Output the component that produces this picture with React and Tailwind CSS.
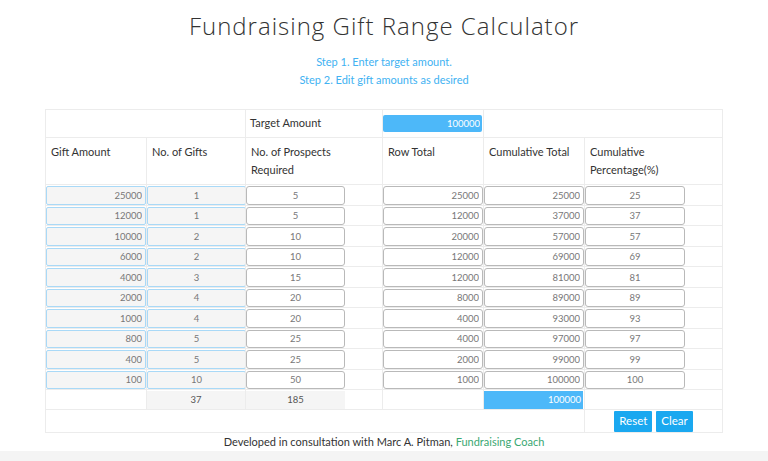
import React from "react";

const rows = [
  [25000, 1, 5, 25000, 25000, 25],
  [12000, 1, 5, 12000, 37000, 37],
  [10000, 2, 10, 20000, 57000, 57],
  [6000, 2, 10, 12000, 69000, 69],
  [4000, 3, 15, 12000, 81000, 81],
  [2000, 4, 20, 8000, 89000, 89],
  [1000, 4, 20, 4000, 93000, 93],
  [800, 5, 25, 4000, 97000, 97],
  [400, 5, 25, 2000, 99000, 99],
  [100, 10, 50, 1000, 100000, 100],
];

const cell = "border border-[#ececec] p-0";
const blueInput =
  "block h-[18.5px] bg-[#f5f5f5] border-[1.5px] border-[#a9d9f7] rounded-[2px] text-[9.5px] text-[#777] outline-none px-[3px]";
const grayInput =
  "block h-[18.5px] bg-white border-[1.5px] border-[#b9b9b9] rounded-[3px] text-[9.5px] text-[#777] outline-none px-[3px]";

const App = () => {
  return (
    <div
      className="bg-white h-[461px] overflow-hidden flex flex-col"
      style={{ fontFamily: "Lato, 'Open Sans', sans-serif" }}
    >
      <div className="pt-[10px] text-center">
        <h1
          className="text-[24px] leading-[32px] text-[#333] font-light tracking-[1px]"
          style={{ fontFamily: "'Open Sans', Lato, sans-serif" }}
        >
          Fundraising Gift Range Calculator
        </h1>
        <p className="mt-[11px] text-[11px] leading-[18px] text-[#41b2f2]">
          Step 1. Enter target amount.
        </p>
        <p className="text-[11px] leading-[18px] text-[#41b2f2]">
          Step 2. Edit gift amounts as desired
        </p>
      </div>

      <table className="mt-[20px] mx-auto w-[677px] border-collapse table-fixed text-[11px] text-[#333]">
        <colgroup>
          <col className="w-[101px]" />
          <col className="w-[99px]" />
          <col className="w-[137px]" />
          <col className="w-[101px]" />
          <col className="w-[101px]" />
          <col className="w-[138px]" />
        </colgroup>
        <tbody>
          <tr className="h-[28px]">
            <td className={cell} colSpan={2}></td>
            <td className={`${cell} px-[4px] align-middle`}>Target Amount</td>
            <td className={`${cell} align-middle`}>
              <input
                readOnly
                value="100000"
                className="block w-[99px] h-[17px] bg-[#4db8f9] rounded-[2px] text-right text-[9.5px] text-white px-[2px] outline-none"
              />
            </td>
            <td className={cell} colSpan={2}></td>
          </tr>
          <tr className="h-[47px]">
            {[
              ["Gift Amount"],
              ["No. of Gifts"],
              ["No. of Prospects", "Required"],
              ["Row Total"],
              ["Cumulative Total"],
              ["Cumulative", "Percentage(%)"],
            ].map((h) => (
              <td key={h[0]} className={`${cell} align-top px-[5px] pt-[5px] leading-[18px]`}>
                {h[0]}
                {h[1] && (
                  <>
                    <br />
                    {h[1]}
                  </>
                )}
              </td>
            ))}
          </tr>
          {rows.map((r, i) => (
            <tr key={i} className="h-[20.5px]">
              <td className={`${cell} align-top pt-px`}>
                <input readOnly value={r[0]} className={`${blueInput} w-[100px] text-right`} />
              </td>
              <td className={`${cell} align-top pt-px`}>
                <input readOnly value={r[1]} className={`${blueInput} w-[99px] text-center`} />
              </td>
              <td className={`${cell} align-top pt-px`}>
                <input readOnly value={r[2]} className={`${grayInput} w-[99px] text-center`} />
              </td>
              <td className={`${cell} align-top pt-px`}>
                <input readOnly value={r[3]} className={`${grayInput} w-[100px] text-right`} />
              </td>
              <td className={`${cell} align-top pt-px`}>
                <input readOnly value={r[4]} className={`${grayInput} w-[100px] text-right`} />
              </td>
              <td className={`${cell} align-top pt-px`}>
                <input readOnly value={r[5]} className={`${grayInput} w-[100px] text-center`} />
              </td>
            </tr>
          ))}
          <tr className="h-[20px]">
            <td className={cell}></td>
            <td className={`${cell} align-top pt-px`}>
              <div className="h-[18px] bg-[#f5f5f5] text-center text-[9.5px] leading-[18px] text-[#555]">
                37
              </div>
            </td>
            <td className={`${cell} align-top pt-px`}>
              <div className="w-[99px] h-[18px] bg-[#f5f5f5] text-center text-[9.5px] leading-[18px] text-[#555]">
                185
              </div>
            </td>
            <td className={cell}></td>
            <td className={`${cell} align-top pt-px`}>
              <div className="w-[99px] h-[18px] bg-[#4db8f9] text-right pr-[2px] text-[9.5px] leading-[18px] text-white">
                100000
              </div>
            </td>
            <td className={cell}></td>
          </tr>
          <tr className="h-[23px]">
            <td className={cell} colSpan={5}></td>
            <td className={`${cell} align-middle`}>
              <div className="flex justify-center gap-[4px]">
                <button className="h-[21px] px-[5px] bg-[#1aa8f0] text-white text-[11.5px] rounded-[1px]">
                  Reset
                </button>
                <button className="h-[21px] px-[5px] bg-[#1aa8f0] text-white text-[11.5px] rounded-[1px]">
                  Clear
                </button>
              </div>
            </td>
          </tr>
        </tbody>
      </table>

      <p className="text-center text-[11px] leading-[18px] text-[#333]">
        Developed in consultation with Marc A. Pitman,{" "}
        <a className="text-[#3aa872]">Fundraising Coach</a>
      </p>
      <div className="flex-1 bg-[#f4f4f4]"></div>
    </div>
  );
};

export default App;
